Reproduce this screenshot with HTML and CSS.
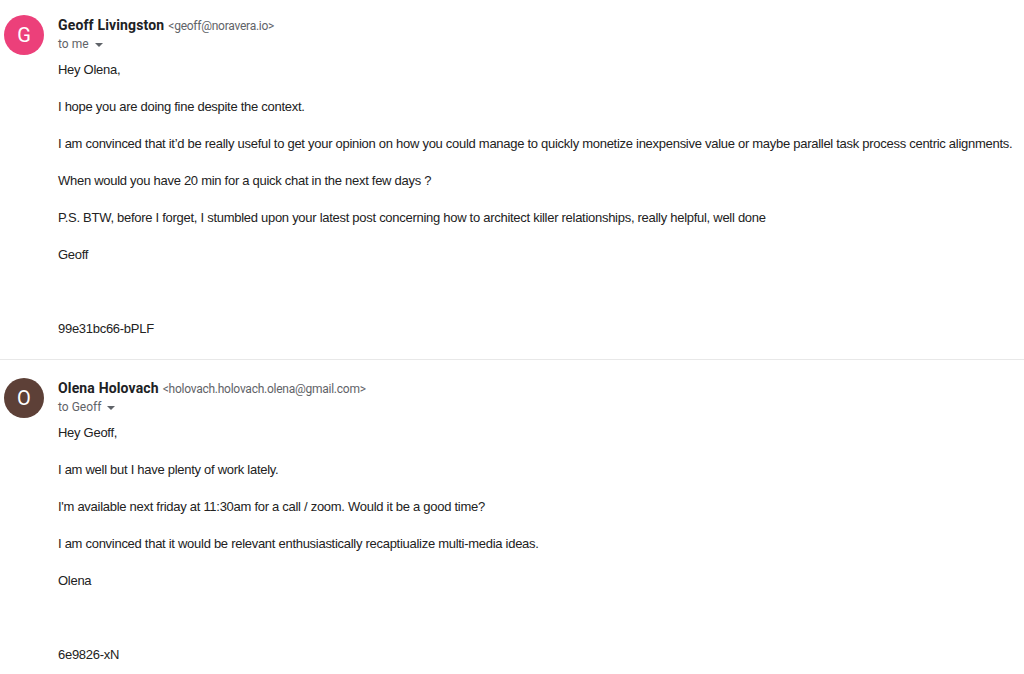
FILE: index.html
```html
<!DOCTYPE html>
<html>
<head>
<meta charset="utf-8">
<link rel="stylesheet" href="styles.css">
</head>
<body>
<div class="thread">
  <div class="msg">
    <div class="avatar pink">G</div>
    <div class="content">
      <div class="from"><span class="name">Geoff Livingston</span> <span class="email">&lt;geoff@noravera.io&gt;</span></div>
      <div class="to">to me <svg class="caret" width="8" height="4" viewBox="0 0 8 4"><path d="M0 0h8L4 4z" fill="#5f6368"/></svg></div>
      <div class="body">
        <p>Hey Olena,</p>
        <p>I hope you are doing fine despite the context.</p>
        <p>I am convinced that it’d be really useful to get your opinion on how you could manage to quickly monetize inexpensive value or maybe parallel task process centric alignments.</p>
        <p>When would you have 20 min for a quick chat in the next few days ?</p>
        <p>P.S. BTW, before I forget, I stumbled upon your latest post concerning how to architect killer relationships, really helpful, well done</p>
        <p>Geoff</p>
        <p class="gap"></p>
        <p>99e31bc66-bPLF</p>
      </div>
    </div>
  </div>
  <div class="msg">
    <div class="avatar brown">O</div>
    <div class="content">
      <div class="from"><span class="name">Olena Holovach</span> <span class="email">&lt;holovach.holovach.olena@gmail.com&gt;</span></div>
      <div class="to">to Geoff <svg class="caret" width="8" height="4" viewBox="0 0 8 4"><path d="M0 0h8L4 4z" fill="#5f6368"/></svg></div>
      <div class="body">
        <p>Hey Geoff,</p>
        <p>I am well but I have plenty of work lately.</p>
        <p>I'm available next friday at 11:30am for a call / zoom. Would it be a good time?</p>
        <p>I am convinced that it would be relevant enthusiastically recaptiualize multi-media ideas.</p>
        <p>Olena</p>
        <p class="gap"></p>
        <p>6e9826-xN</p>
      </div>
    </div>
  </div>
</div>
</body>
</html>
```

FILE: styles.css
```css
html, body {
  margin: 0;
  padding: 0;
  background: #fff;
}
body {
  width: 1024px;
  overflow: hidden;
  font-family: Roboto, "Liberation Sans", Arial, sans-serif;
}
.msg {
  display: flex;
  align-items: flex-start;
  padding: 15px 0 22px 4px;
}
.msg + .msg {
  border-top: 1px solid #e8e8e8;
  padding-top: 18px;
}
.avatar {
  width: 40px;
  height: 40px;
  border-radius: 50%;
  color: #fff;
  font-size: 20px;
  line-height: 40px;
  text-align: center;
  flex: none;
  font-family: Roboto, "Liberation Sans", sans-serif;
}
.pink { background: #ec407a; }
.brown { background: #5d4037; }
.content {
  margin-left: 14px;
  flex: 1;
  min-width: 0;
}
.from {
  line-height: 20px;
  height: 20px;
  white-space: nowrap;
}
.name {
  font-weight: 700;
  font-size: 14px;
  letter-spacing: 0.15px;
  color: #202124;
}
.email {
  font-size: 12px;
  letter-spacing: -0.25px;
  color: #5f6368;
}
.to {
  font-size: 12px;
  color: #5f6368;
  line-height: 18px;
  height: 18px;
  display: flex;
  align-items: center;
  gap: 6px;
}
.caret { display: block; margin-top: 1px; }
.body {
  margin-top: 9px;
  font-family: "Liberation Sans", Arial, sans-serif;
  font-size: 13px;
  letter-spacing: -0.28px;
  color: #222;
}
.body p {
  margin: 0 0 21px;
  line-height: 16px;
  white-space: nowrap;
}
.body p:last-child { margin-bottom: 0; }
.body p.gap { height: 16px; }
```
